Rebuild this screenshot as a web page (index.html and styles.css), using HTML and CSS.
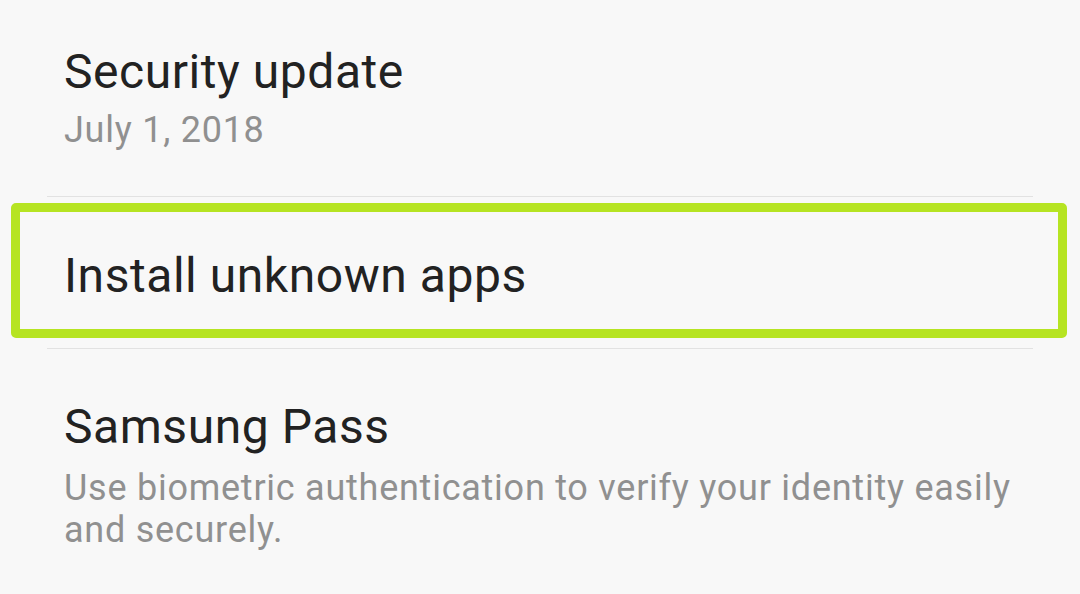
FILE: index.html
```html
<!DOCTYPE html>
<html>
<head>
<meta charset="utf-8">
<link rel="stylesheet" href="styles.css">
</head>
<body>
<div class="list">
  <div class="item first">
    <div class="title">Security update</div>
    <div class="sub">July 1, 2018</div>
  </div>
  <div class="divider"></div>
  <div class="item second">
    <div class="title">Install unknown apps</div>
    <div class="highlight"></div>
  </div>
  <div class="divider"></div>
  <div class="item third">
    <div class="title">Samsung Pass</div>
    <div class="sub">Use biometric authentication to verify your identity easily and securely.</div>
  </div>
</div>
</body>
</html>
```
FILE: styles.css
```css
html, body {
  margin: 0;
  padding: 0;
  background: #f8f8f8;
  width: 1080px;
  height: 594px;
  overflow: hidden;
  font-family: Roboto, "Noto Sans", sans-serif;
}
.list {
  margin: 0 47px;
  width: 986px;
}
.item {
  position: relative;
  padding-left: 17px;
  padding-right: 17px;
}
.title {
  font-size: 48px;
  line-height: 56px;
  letter-spacing: 0.55px;
  color: #222222;
}
.sub {
  font-size: 36px;
  line-height: 42px;
  letter-spacing: 0.75px;
  color: #909090;
}
.first {
  padding-top: 44px;
  padding-bottom: 45px;
}
.first .sub {
  margin-top: 9px;
}
.second {
  padding-top: 50.5px;
  padding-bottom: 44.5px;
}
.third {
  padding-top: 49.5px;
}
.third .sub {
  margin-top: 12px;
}
.divider {
  height: 1px;
  background: #e2e2e2;
}
.highlight {
  position: absolute;
  left: -36px;
  right: -34px;
  top: 6px;
  height: 135px;
  box-sizing: border-box;
  border: 9px solid #b6e422;
  border-radius: 5px;
}
```
